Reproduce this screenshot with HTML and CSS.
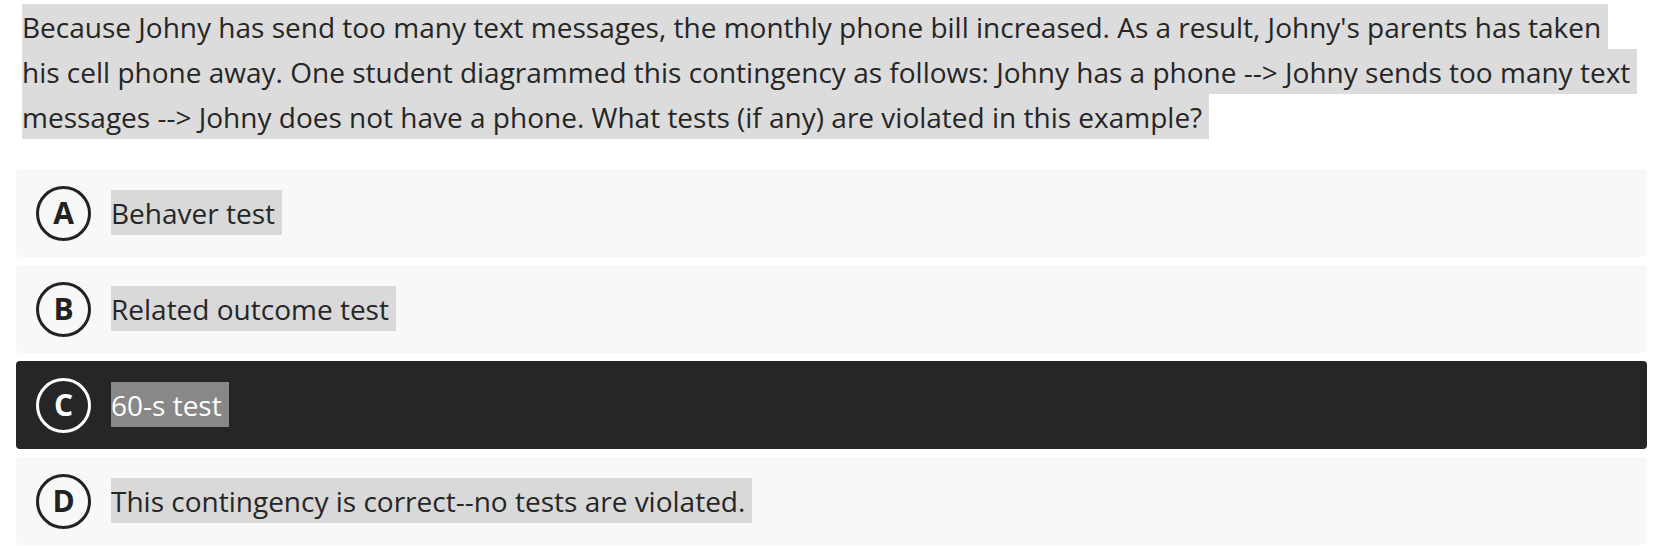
FILE: index.html
```html
<!DOCTYPE html>
<html lang="en">
<head>
<meta charset="utf-8">
<title>Question</title>
<link rel="stylesheet" href="styles.css">
</head>
<body>
<div class="page">
  <p class="question"><span class="hl">Because Johny has send too many text messages, the monthly phone bill increased. As a result, Johny's parents has taken his cell phone away. One student diagrammed this contingency as follows: Johny has a phone --&gt; Johny sends too many text messages --&gt; Johny does not have a phone. What tests (if any) are violated in this example?</span></p>
  <div class="options">
    <div class="option">
      <span class="badge">A</span>
      <span class="label"><span class="hl">Behaver test</span></span>
    </div>
    <div class="option">
      <span class="badge">B</span>
      <span class="label"><span class="hl">Related outcome test</span></span>
    </div>
    <div class="option selected">
      <span class="badge">C</span>
      <span class="label"><span class="hl">60-s test</span></span>
    </div>
    <div class="option">
      <span class="badge">D</span>
      <span class="label"><span class="hl">This contingency is correct--no tests are violated.</span></span>
    </div>
  </div>
</div>
</body>
</html>
```

FILE: styles.css
```css
html, body {
  margin: 0;
  padding: 0;
  background: #ffffff;
}

body {
  font-family: "Open Sans", "Noto Sans", sans-serif;
  color: #262626;
}

.page {
  padding: 4px 29px 0 16px;
}

.question {
  margin: 0 0 30px 0;
  padding: 0 7px 0 6px;
  font-size: 28px;
  line-height: 45px;
}

.question .hl {
  background: #dcdcdc;
  padding: 3.5px 7px 3.5px 0;
  -webkit-box-decoration-break: clone;
  box-decoration-break: clone;
}

.options {
  display: flex;
  flex-direction: column;
  gap: 8px;
}

.option {
  height: 88px;
  box-sizing: border-box;
  background: #f8f8f8;
  border-radius: 4px;
  display: flex;
  align-items: center;
  gap: 20px;
  padding-left: 20px;
}

.badge {
  width: 55px;
  height: 55px;
  box-sizing: border-box;
  border: 3.5px solid #222222;
  border-radius: 50%;
  display: flex;
  align-items: center;
  justify-content: center;
  font-weight: 700;
  font-size: 30px;
  line-height: 1;
  color: #222222;
  flex: none;
}

.label {
  font-size: 28px;
  line-height: 45px;
}

.label .hl {
  background: #d9d9d9;
  padding: 3.5px 7px 3.5px 0;
}

.option.selected {
  background: #262626;
}

.option.selected .badge {
  border-color: #ffffff;
  color: #ffffff;
}

.option.selected .label {
  color: #ffffff;
}

.option.selected .label .hl {
  background: #888888;
}
```
